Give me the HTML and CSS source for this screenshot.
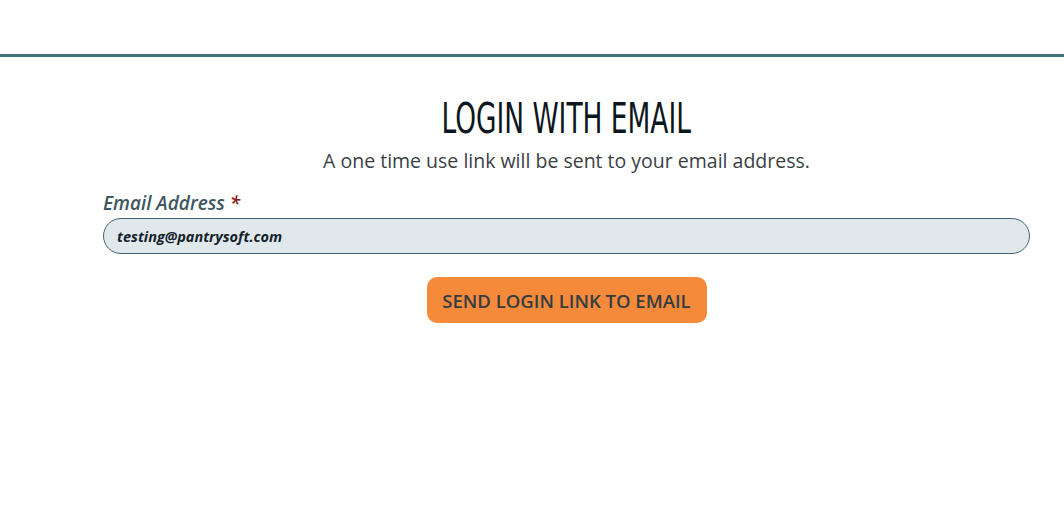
FILE: index.html
```html
<!DOCTYPE html>
<html lang="en">
<head>
    <meta charset="UTF-8">
    <meta name="viewport" content="width=device-width, initial-scale=1.0">
    <title>Login with Email</title>
    <link rel="stylesheet" href="styles.css">
</head>
<body>
  <div class="topbar"></div>

  <div class="login">
      <div class="login-head">
         <h1 class="login-title">LOGIN WITH EMAIL</h1>
      </div>
      <p class="login-sub">A one time use link will be sent to your email address.</p>

      <form class="login-form">
         <label class="field-label" for="email">Email Address <span class="req">*</span></label>
         <input class="field-input" id="email" type="email" value="testing@pantrysoft.com">

         <div class="actions">
            <button type="submit" class="send-btn">SEND LOGIN LINK TO EMAIL</button>
         </div>
      </form>
  </div>
</body>
</html>
```

FILE: styles.css
```css
*{
   box-sizing: border-box;
}

body{
   margin: 0;
   font-family: 'Open Sans', sans-serif;
   background: #fff;
}

.topbar{
   height: 57px;
   border-bottom: 3px solid #426e7a;
}

.login{
   margin: 0 34px 0 103px;
   padding-top: 40px;
}

.login-head{
   display: flex;
   justify-content: center;
}

.login-title{
   margin: 0;
   font-family: 'DejaVu Sans Condensed', sans-serif;
   font-weight: normal;
   font-size: 42px;
   line-height: 44px;
   color: #0c1620;
   transform: scaleX(0.7);
}

.login-sub{
   margin: 7px 0 0;
   text-align: center;
   font-size: 19.5px;
   line-height: 26px;
   color: #3a3f44;
}

.login-form{
   margin-top: 17px;
}

.field-label{
   display: block;
   font-style: italic;
   font-weight: 600;
   font-size: 19px;
   line-height: 24px;
   color: #3d5660;
}

.req{
   color: #8c1c1c;
}

.field-input{
   display: block;
   width: 100%;
   height: 36px;
   margin-top: 3px;
   padding: 0 13px;
   border: 1px solid #3f6470;
   border-radius: 18px;
   background: #e1e8ec;
   font-family: 'Open Sans', sans-serif;
   font-style: italic;
   font-weight: 700;
   font-size: 14.5px;
   color: #14222c;
   outline: none;
}

.actions{
   display: flex;
   justify-content: center;
   margin-top: 23px;
}

.send-btn{
   width: 280px;
   height: 46px;
   border: none;
   border-radius: 10px;
   background: #f58a3a;
   font-family: 'Open Sans', sans-serif;
   font-weight: 600;
   font-size: 18.5px;
   color: #333d42;
   cursor: pointer;
}
```
